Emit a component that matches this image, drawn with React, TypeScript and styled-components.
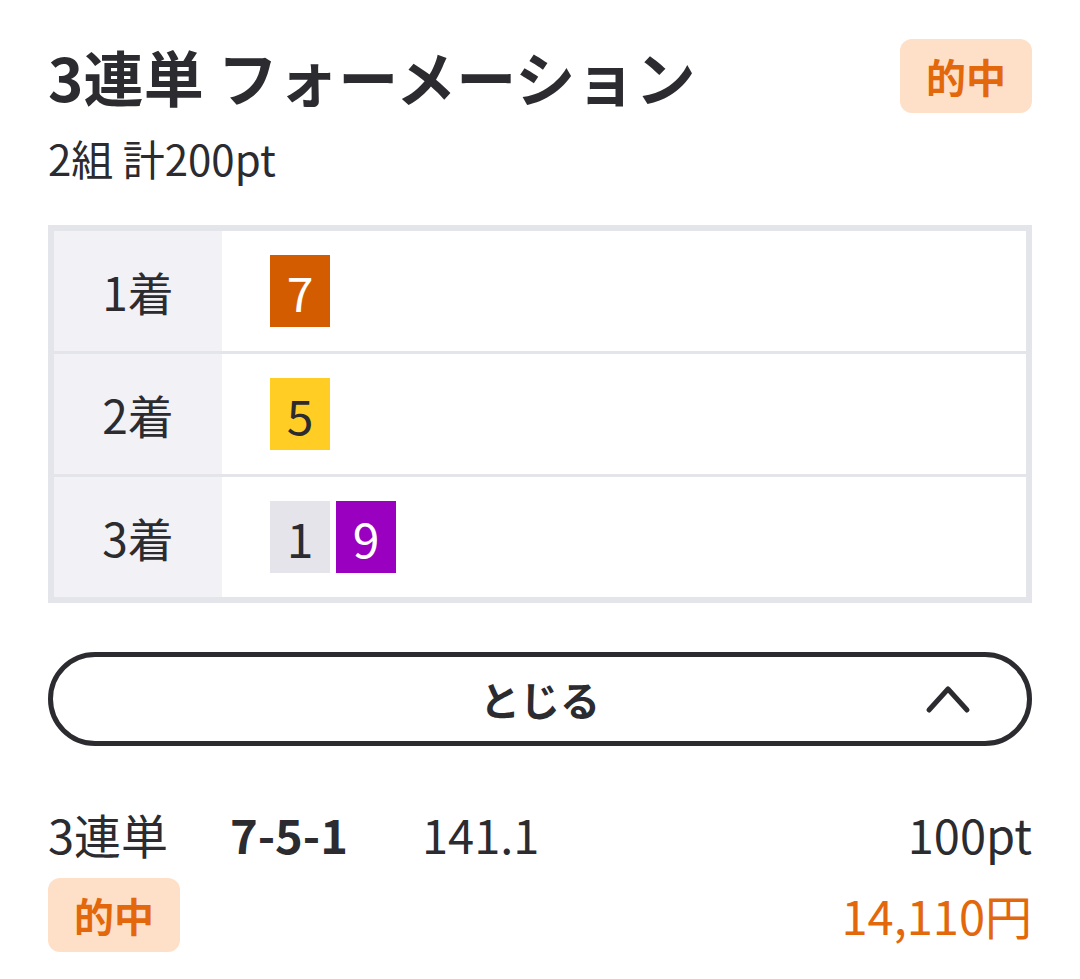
import React from "react";
import styled, { createGlobalStyle } from "styled-components";

const GlobalStyle = createGlobalStyle`
  html, body { margin: 0; padding: 0; background: #ffffff; }
  body { font-family: "Noto Sans CJK JP", "Noto Sans", sans-serif; color: #2b2b30; }
`;

const Page = styled.div`
  padding: 39px 48px 20px;
  box-sizing: border-box;
  width: 1080px;
`;

const HeaderRow = styled.div`
  display: flex;
  justify-content: space-between;
  align-items: center;
  height: 74px;
`;

const Title = styled.h1`
  margin: 0;
  font-size: 60px;
  font-weight: 700;
  line-height: 74px;
  letter-spacing: 0.2px;
`;

const Badge = styled.span`
  display: inline-flex;
  align-items: center;
  justify-content: center;
  width: 132px;
  height: 74px;
  box-sizing: border-box;
  border-radius: 12px;
  background: #fee0c8;
  color: #e3680c;
  font-size: 40px;
  font-weight: 700;
  line-height: 1;
`;

const Sub = styled.div`
  margin-top: 15px;
  font-size: 42px;
  line-height: 60px;
`;

const Table = styled.div`
  margin-top: 37px;
  border: 6px solid #e4e4eb;
  display: flex;
  flex-direction: column;
`;

const Row = styled.div`
  display: flex;
  height: 120px;
  & + & {
    border-top: 3px solid #e4e4eb;
  }
`;

const Label = styled.div`
  width: 168px;
  flex: none;
  background: #f1f1f6;
  display: flex;
  align-items: center;
  justify-content: center;
  font-size: 46px;
`;

const Cell = styled.div`
  flex: 1;
  display: flex;
  align-items: center;
  gap: 6px;
  padding-left: 48px;
`;

const Num = styled.span<{ $bg: string; $fg: string }>`
  width: 60px;
  height: 72px;
  display: inline-flex;
  align-items: center;
  justify-content: center;
  background: ${(p) => p.$bg};
  color: ${(p) => p.$fg};
  font-size: 48px;
  line-height: 1;
`;

const CloseButton = styled.button`
  margin-top: 49px;
  width: 100%;
  height: 94px;
  box-sizing: border-box;
  border: 5px solid #2b2b30;
  border-radius: 47px;
  background: #fff;
  position: relative;
  display: flex;
  align-items: center;
  justify-content: center;
  font-family: inherit;
  font-size: 40px;
  font-weight: 700;
  color: #2b2b30;
  padding: 0;
`;

const Chevron = styled.svg`
  position: absolute;
  right: 56px;
  top: 50%;
  transform: translateY(-50%);
`;

const BetRow = styled.div`
  margin-top: 58px;
  display: grid;
  grid-template-columns: 182px 192px 1fr auto;
  align-items: center;
  font-size: 47px;
  line-height: 60px;
`;

const Strong = styled.span`
  font-weight: 700;
`;

const Right = styled.span`
  text-align: right;
`;

const ResultRow = styled.div`
  margin-top: 14px;
  display: flex;
  justify-content: space-between;
  align-items: center;
`;

const Amount = styled.span`
  color: #e3680c;
  font-size: 47px;
  line-height: 60px;
`;

const rows = [
  { label: "1着", nums: [{ n: "7", bg: "#d45c00", fg: "#ffffff" }] },
  { label: "2着", nums: [{ n: "5", bg: "#ffcd24", fg: "#2b2b30" }] },
  {
    label: "3着",
    nums: [
      { n: "1", bg: "#e4e4ea", fg: "#2b2b30" },
      { n: "9", bg: "#9900bf", fg: "#ffffff" },
    ],
  },
];

export default function App() {
  return (
    <>
      <GlobalStyle />
      <Page>
        <HeaderRow>
          <Title>3連単 フォーメーション</Title>
          <Badge>的中</Badge>
        </HeaderRow>
        <Sub>2組 計200pt</Sub>
        <Table>
          {rows.map((r) => (
            <Row key={r.label}>
              <Label>{r.label}</Label>
              <Cell>
                {r.nums.map((x) => (
                  <Num key={x.n} $bg={x.bg} $fg={x.fg}>
                    {x.n}
                  </Num>
                ))}
              </Cell>
            </Row>
          ))}
        </Table>
        <CloseButton>
          とじる
          <Chevron width="46" height="30" viewBox="0 0 46 30">
            <path
              d="M4 26 L23 5 L42 26"
              fill="none"
              stroke="#2b2b30"
              strokeWidth="5"
              strokeLinecap="round"
              strokeLinejoin="round"
            />
          </Chevron>
        </CloseButton>
        <BetRow>
          <span>3連単</span>
          <Strong>7-5-1</Strong>
          <span>141.1</span>
          <Right>100pt</Right>
        </BetRow>
        <ResultRow>
          <Badge>的中</Badge>
          <Amount>14,110円</Amount>
        </ResultRow>
      </Page>
    </>
  );
}
